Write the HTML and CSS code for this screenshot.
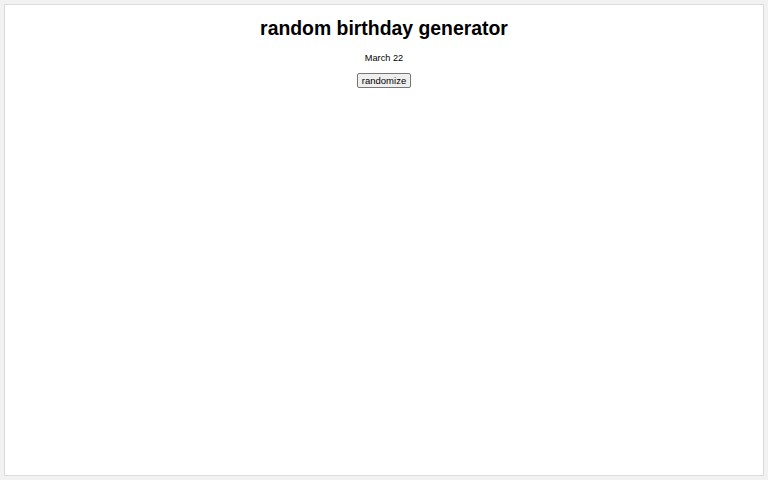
FILE: index.html
```html
<!DOCTYPE html>
<html lang="en">
<head>
  <meta charset="UTF-8">
  <title>random birthday generator</title>
  <link rel="stylesheet" href="styles.css">
</head>
<body>
  <div class="card">
    <h1 class="title">random birthday generator</h1>
    <p class="date" id="date">March 22</p>
    <button class="btn" id="randomize">randomize</button>
  </div>
</body>
</html>
```

FILE: styles.css
```css
html, body {
  height: 100%;
}

body {
  margin: 0;
  padding: 4px;
  box-sizing: border-box;
  background: #f2f2f2;
  font-family: "Liberation Sans", Arial, sans-serif;
  color: #000;
}

.card {
  height: 100%;
  box-sizing: border-box;
  background: #fff;
  border: 1px solid #dcdcdc;
  text-align: center;
  padding-top: 13px;
}

.title {
  margin: 0;
  font-size: 19.4px;
  font-weight: bold;
  line-height: 20px;
}

.date {
  margin: 14px 0 6px;
  font-size: 9.2px;
  line-height: 12px;
}

.btn {
  font-family: "Liberation Sans", Arial, sans-serif;
  font-size: 9.5px;
  padding: 1px 4px;
  background: #efefef;
  border: 1px solid #767676;
  border-radius: 2px;
  color: #000;
}
```
